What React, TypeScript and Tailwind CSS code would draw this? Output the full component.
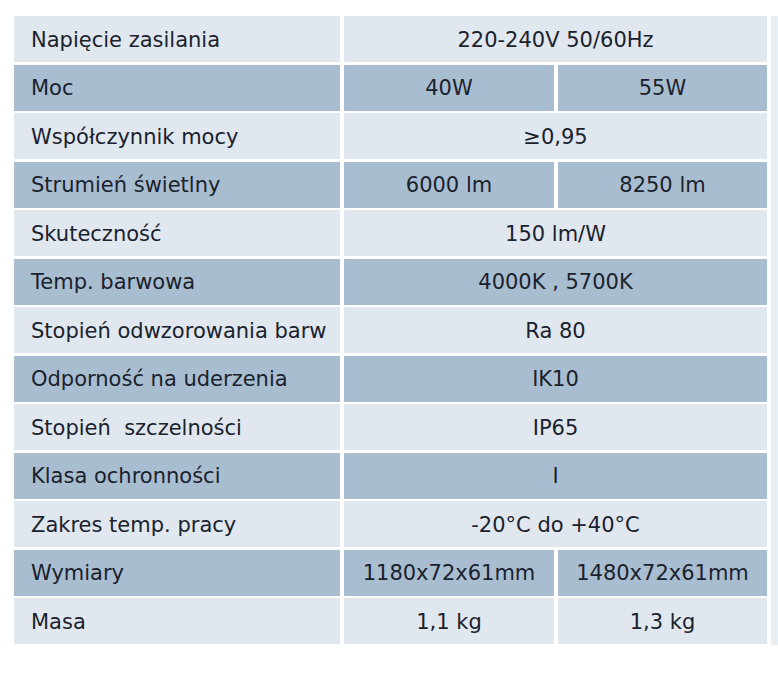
import React from "react"

type Row = { label: string; values: string[] }

const rows: Row[] = [
    { label: "Napięcie zasilania", values: ["220-240V 50/60Hz"] },
    { label: "Moc", values: ["40W", "55W"] },
    { label: "Współczynnik mocy", values: ["≥0,95"] },
    { label: "Strumień świetlny", values: ["6000 lm", "8250 lm"] },
    { label: "Skuteczność", values: ["150 lm/W"] },
    { label: "Temp. barwowa", values: ["4000K , 5700K"] },
    { label: "Stopień odwzorowania barw", values: ["Ra 80"] },
    { label: "Odporność na uderzenia", values: ["IK10"] },
    { label: "Stopień  szczelności", values: ["IP65"] },
    { label: "Klasa ochronności", values: ["I"] },
    { label: "Zakres temp. pracy", values: ["-20°C do +40°C"] },
    { label: "Wymiary", values: ["1180x72x61mm", "1480x72x61mm"] },
    { label: "Masa", values: ["1,1 kg", "1,3 kg"] },
]

export default function App() {
    return (
        <div className="w-[778px] h-[675px] bg-white pt-4 pl-[14px] flex gap-1 text-[#1a222d] text-[21px]" style={{ fontFamily: '"DejaVu Sans", sans-serif' }}>
            <div className="w-[753px] grid grid-cols-[326px_210px_209px] gap-x-1 gap-y-[2.5px] auto-rows-[46px] h-fit">
                {rows.map((row, i) => {
                    const bg = i % 2 === 0 ? "bg-[#e0e7ef]" : "bg-[#a9bdd0]"
                    return (
                        <React.Fragment key={i}>
                            <div className={`${bg} flex items-center pl-[17px] pt-[3px] whitespace-pre`}>{row.label}</div>
                            {row.values.length === 1 ? (
                                <div className={`${bg} col-span-2 flex items-center justify-center pt-[3px]`}>{row.values[0]}</div>
                            ) : (
                                row.values.map((v, j) => (
                                    <div key={j} className={`${bg} flex items-center justify-center pt-[3px]`}>{v}</div>
                                ))
                            )}
                        </React.Fragment>
                    )
                })}
            </div>
            <div className="w-[7px] h-[629px] bg-[#e9eef3]" />
        </div>
    )
}
